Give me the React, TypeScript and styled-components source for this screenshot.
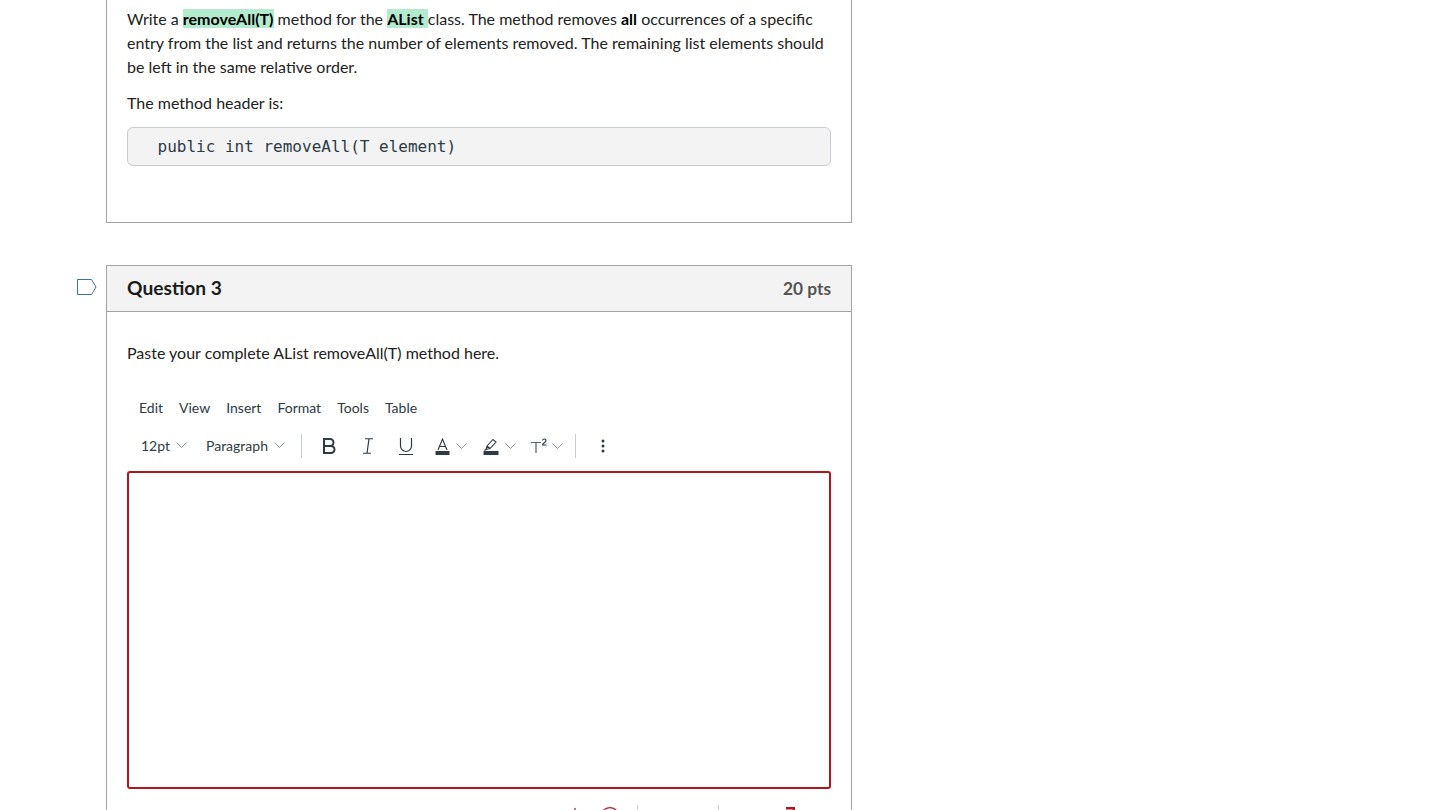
import React, { FC } from 'react'
import styled, { createGlobalStyle } from 'styled-components'

const GlobalStyle = createGlobalStyle`
  html, body {
    margin: 0;
    padding: 0;
    height: 810px;
    overflow: hidden;
    background: #fff;
    font-family: Lato, "Liberation Sans", sans-serif;
    color: #222;
  }
`

const Page = styled.div`
  width: 746px;
  margin-left: 106px;
`

const QuestionCard = styled.section<{ $clipped?: boolean }>`
  position: relative;
  border: 1px solid #a3a3a3;
  border-top: ${p => (p.$clipped ? 'none' : '1px solid #a3a3a3')};
  margin-bottom: 42px;
`

const Flag = styled.svg`
  position: absolute;
  left: -30px;
  top: 13px;
`

const QuestionHeader = styled.header`
  display: flex;
  justify-content: space-between;
  align-items: center;
  height: 45px;
  padding: 0 20px;
  background: #f3f3f3;
  border-bottom: 1px solid #a3a3a3;
`

const QuestionTitle = styled.h2`
  margin: 0 0 2px;
  font-size: 19.2px;
  font-weight: 700;
  color: #1c1c1c;
`

const Points = styled.span`
  font-size: 17.3px;
  font-weight: 700;
  color: #555;
`

const QuestionBody = styled.div`
  padding: 7px 20px 56px;
`

const Para = styled.p`
  margin: 0 0 12px;
  font-size: 16px;
  line-height: 24px;
  color: #222;

  strong {
    color: #000;
  }
`

const Mark = styled.span`
  background: #b3ebcf;
`

const CodeBlock = styled.pre`
  margin: 0;
  height: 37px;
  padding: 0 29.5px;
  line-height: 37px;
  font-family: "DejaVu Sans Mono", monospace;
  font-size: 16px;
  color: #2d3b45;
  background: #f3f3f3;
  border: 1px solid #c7cdd1;
  border-radius: 6px;
`

const AnswerBody = styled.div`
  padding: 29px 20px 0;
`

const MenuBar = styled.div`
  display: flex;
  gap: 16px;
  padding: 0 12px;
  margin-top: 32px;
  height: 20px;
  align-items: center;
  font-size: 14px;
  color: #2d3b45;
`

const Toolbar = styled.div`
  display: flex;
  align-items: center;
  height: 38px;
  margin-top: 10px;
  margin-bottom: 6px;
  padding-left: 14px;
  color: #2d3b45;
`

const Select = styled.div<{ $width: number }>`
  display: flex;
  align-items: center;
  gap: 6px;
  width: ${p => p.$width}px;
  padding-bottom: 2px;
  font-size: 14px;
`

const Caret = styled.svg<{ $gap?: number }>`
  flex: none;
  margin-left: ${p => p.$gap ?? 0}px;
`

const Chevron: FC<{ gap?: number }> = ({ gap }) => (
  <Caret $gap={gap} width="11" height="6" viewBox="0 0 11 6" fill="none">
    <path d="M.5.5l5 5 5-5" stroke="#8a959c" strokeWidth="1" />
  </Caret>
)

const Divider = styled.span<{ $gap?: number }>`
  flex: none;
  width: 1px;
  height: 24px;
  margin-left: ${p => p.$gap ?? 0}px;
  background: #c7cdd1;
`

const ToolIcon = styled.div<{ $width: number; $gap?: number }>`
  display: flex;
  flex: none;
  align-items: center;
  justify-content: center;
  width: ${p => p.$width}px;
  height: 24px;
  margin-left: ${p => p.$gap ?? 0}px;
`

const Editor = styled.div`
  height: 314px;
  border: 2px solid #b1161f;
  border-radius: 3px;
  background: #fff;
`

const StatusBar = styled.div`
  position: relative;
  height: 30px;
  margin-top: 16px;
`

const StatusDivider = styled.span<{ $left: number }>`
  position: absolute;
  top: 0;
  left: ${p => p.$left}px;
  width: 1px;
  height: 24px;
  background: #c7cdd1;
`

const StatusIcon = styled.svg<{ $left: number; $top: number }>`
  position: absolute;
  top: ${p => p.$top}px;
  left: ${p => p.$left}px;
`

const App: FC = () => {
  return (
    <>
      <GlobalStyle />
      <Page>
        <QuestionCard $clipped>
          <QuestionBody>
            <Para>
              Write a <Mark><strong>removeAll(T)</strong></Mark> method for the <Mark><strong>AList</strong>&nbsp;</Mark>class. The method removes <strong>all</strong> occurrences of a specific entry from the list and returns the number of elements removed. The remaining list elements should be left in the same relative order.
            </Para>
            <Para>The method header is:</Para>
            <CodeBlock>public int removeAll(T element)</CodeBlock>
          </QuestionBody>
        </QuestionCard>

        <QuestionCard>
          <Flag width="20" height="16" viewBox="0 0 20 16" fill="none">
            <path d="M.5.5h14l4.500 7.500-4.500 7.500h-14z" stroke="#3f7396" strokeWidth="1" />
          </Flag>
          <QuestionHeader>
            <QuestionTitle>Question 3</QuestionTitle>
            <Points>20 pts</Points>
          </QuestionHeader>
          <AnswerBody>
            <Para>Paste your complete AList removeAll(T) method here.</Para>
            <MenuBar>
              <span>Edit</span>
              <span>View</span>
              <span>Insert</span>
              <span>Format</span>
              <span>Tools</span>
              <span>Table</span>
            </MenuBar>
            <Toolbar>
              <Select $width={65}>12pt <Chevron /></Select>
              <Select $width={95}>Paragraph <Chevron /></Select>
              <Divider />
              <ToolIcon $width={54}>
                <svg width="14" height="16" viewBox="0 0 14 16" fill="none">
                  <path d="M2 1h6a3.500 3.500 0 010 7H2zM2 8h7a3.500 3.500 0 010 7H2z" stroke="#2d3b45" strokeWidth="2" />
                </svg>
              </ToolIcon>
              <ToolIcon $width={24}>
                <svg width="12" height="16" viewBox="0 0 12 16" fill="none">
                  <path d="M3 .75h8M1 15.250h8M7 .75L5 15.250" stroke="#2d3b45" strokeWidth="1.200" />
                </svg>
              </ToolIcon>
              <ToolIcon $width={52}>
                <svg width="16" height="17" viewBox="0 0 16 17" fill="none">
                  <path d="M2.500 0v8a5.500 5.500 0 0011 0V0M1 16.500h14" stroke="#2d3b45" strokeWidth="1.200" />
                </svg>
              </ToolIcon>
              <ToolIcon $width={20}>
                <svg width="15" height="17" viewBox="0 0 15 17" fill="none">
                  <path d="M3 12L7.500 1 12 12M4.500 8.500h6" stroke="#2d3b45" strokeWidth="1.100" />
                  <rect x="0.500" y="13" width="14" height="4" fill="#2d3b45" />
                </svg>
              </ToolIcon>
              <Chevron gap={3.5} />
              <ToolIcon $width={20} $gap={14.5}>
                <svg width="16" height="17" viewBox="0 0 16 17" fill="none">
                  <path d="M3 11.500l1-3.500 6-6.500 3 2.500-6 6.500zM4 8l3 2.500M1.500 12.500l1.500-1" stroke="#2d3b45" strokeWidth="1.100" />
                  <rect x="0.500" y="13" width="15" height="4" fill="#2d3b45" />
                </svg>
              </ToolIcon>
              <Chevron gap={3.5} />
              <ToolIcon $width={20} $gap={13.5}>
                <svg width="18" height="16" viewBox="0 0 18 16" fill="none">
                  <path d="M1 4.500h10M6 4.500V15" stroke="#56626b" strokeWidth="1.200" />
                  <path d="M12.500 2.500c.3-2 3.500-2 3.500 0 0 1.500-3.500 3-3.500 4.500h4" stroke="#2d3b45" strokeWidth="1.200" />
                </svg>
              </ToolIcon>
              <Chevron gap={2.5} />
              <Divider $gap={12.5} />
              <ToolIcon $width={20} $gap={16.5}>
                <svg width="4" height="14" viewBox="0 0 4 14" fill="#2d3b45">
                  <circle cx="2" cy="2" r="1.500" />
                  <circle cx="2" cy="7" r="1.500" />
                  <circle cx="2" cy="12" r="1.500" />
                </svg>
              </ToolIcon>
            </Toolbar>
            <Editor />
            <StatusBar>
              <StatusDivider $left={510} />
              <StatusDivider $left={591} />
              <StatusIcon $left={446} $top={3} width="4" height="10" viewBox="0 0 4 10" fill="none">
                <path d="M2 0v10" stroke="#b1161f" strokeWidth="1.200" />
              </StatusIcon>
              <StatusIcon $left={473} $top={2} width="20" height="20" viewBox="0 0 20 20" fill="none">
                <circle cx="10" cy="10" r="9.400" stroke="#b1161f" strokeWidth="1.200" />
              </StatusIcon>
              <StatusIcon $left={659} $top={2} width="9" height="10" viewBox="0 0 9 10" fill="none">
                <path d="M0 1.200h8V10" stroke="#b1161f" strokeWidth="2.400" />
              </StatusIcon>
            </StatusBar>
          </AnswerBody>
        </QuestionCard>
      </Page>
    </>
  )
}

export default App
